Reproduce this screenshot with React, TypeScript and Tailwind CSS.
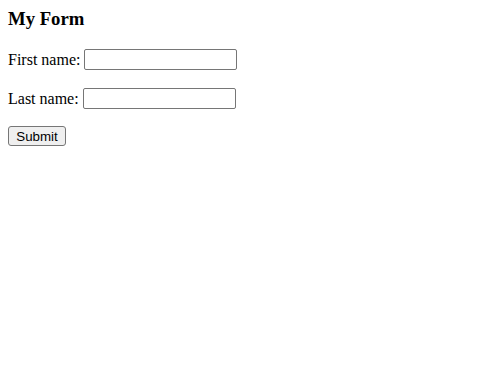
import React from 'react';

const serif = "font-['Liberation_Serif','Times_New_Roman',serif]";

const App = () => {
  return (
    <div className={`p-2 text-black bg-white ${serif}`}>
      <h3 className="mt-0 mb-[18.72px] text-[18.72px] font-bold leading-[21.5px]">My Form</h3>
      <form>
        <p className="mb-4 text-base leading-[23px] flex items-center">
          <label htmlFor="fname">First name:</label>
          <input
            id="fname"
            type="text"
            className="ml-[4px] w-[153px] h-[21px] border border-[#767676] rounded-[2px] px-[2px] text-[13.33px] bg-white"
          />
        </p>
        <p className="mb-4 text-base leading-[23px] flex items-center">
          <label htmlFor="lname">Last name:</label>
          <input
            id="lname"
            type="text"
            className="ml-[4px] w-[153px] h-[21px] border border-[#767676] rounded-[2px] px-[2px] text-[13.33px] bg-white"
          />
        </p>
        <button
          type="submit"
          className="block mt-[1px] w-[58px] h-[20px] bg-[#efefef] border border-[#767676] rounded-[3px] text-[13.33px] leading-none font-['Liberation_Sans',Arial,sans-serif]"
        >
          Submit
        </button>
      </form>
    </div>
  );
};

export default App;
